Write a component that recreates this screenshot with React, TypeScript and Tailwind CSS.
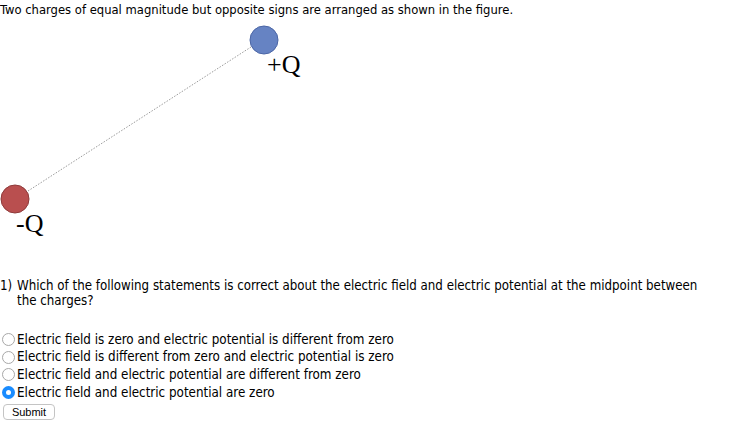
import React from "react";

const options = [
  "Electric field is zero and electric potential is different from zero",
  "Electric field is different from zero and electric potential is zero",
  "Electric field and electric potential are different from zero",
  "Electric field and electric potential are zero",
];

export default function App() {
  return (
    <div className="w-[744px] h-[422px] bg-white text-black overflow-hidden" style={{ fontFamily: "'DejaVu Sans Condensed', 'DejaVu Sans', sans-serif" }}>
      <div className="text-[12.9px] leading-[20px] pl-0 pt-0">Two charges of equal magnitude but opposite signs are arranged as shown in the figure.</div>
      <svg width="320" height="252" viewBox="0 0 320 252" className="block">
        <line x1="28" y1="171" x2="251" y2="27" stroke="#9a9a9a" strokeWidth="1" strokeDasharray="1.5 1.5" />
        <circle cx="264" cy="20" r="14" fill="#6683c3" stroke="#4b66a6" strokeWidth="1" />
        <text x="267" y="53" fontFamily="'Liberation Serif', serif" fontSize="26" fill="#000">+Q</text>
        <circle cx="15" cy="179" r="14" fill="#b94f4f" stroke="#8e3a3a" strokeWidth="1" />
        <text x="16" y="212" fontFamily="'Liberation Serif', serif" fontSize="26" fill="#000">-Q</text>
      </svg>
      <div className="flex text-[13.2px] leading-[15px] mt-[6px] pr-[40px]">
        <span className="w-[17px] shrink-0">1)</span>
        <span>Which of the following statements is correct about the electric field and electric potential at the midpoint between the charges?</span>
      </div>
      <div className="mt-[23px] flex flex-col">
        {options.map((o, i) => (
          <label key={i} className="flex items-center h-[17.6px] text-[13.3px]">
            {i === 3 ? (
              <span className="ml-[2px] mr-[2px] w-[13px] h-[13px] rounded-full bg-[#1a8cff] flex items-center justify-center">
                <span className="w-[5px] h-[5px] rounded-full bg-white" />
              </span>
            ) : (
              <span className="ml-[2px] mr-[2px] w-[13px] h-[13px] rounded-full border border-[#a8a8a8] bg-white" />
            )}
            <span>{o}</span>
          </label>
        ))}
      </div>
      <button className="ml-[3px] mt-[3px] h-[16px] w-[52px] text-[11px] leading-[14px] rounded-[4px] border border-[#c4c4c4] bg-white block" style={{ fontFamily: "'Liberation Sans', Arial, sans-serif" }}>Submit</button>
    </div>
  );
}
